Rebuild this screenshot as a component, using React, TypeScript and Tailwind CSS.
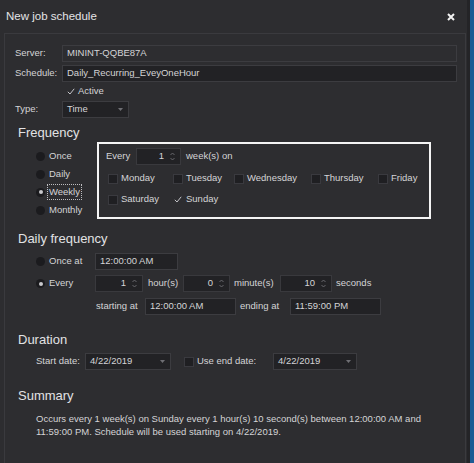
import React from "react";

const txt = "text-[9.5px] text-[#d4d4d6]";

function Arrows() {
  return (
    <svg width="5" height="9" viewBox="0 0 5 9" className="shrink-0">
      <path d="M0.5 3 L2.5 1 L4.5 3" fill="none" stroke="#6f6f74" strokeWidth="0.9" />
      <path d="M0.5 6 L2.5 8 L4.5 6" fill="none" stroke="#6f6f74" strokeWidth="0.9" />
    </svg>
  );
}

function Caret() {
  return (
    <svg width="5" height="3" viewBox="0 0 5 3" className="shrink-0">
      <path d="M0 0 L5 0 L2.5 3 Z" fill="#6f6f74" />
    </svg>
  );
}

function Spinner({ value, w }: { value: string; w: string }) {
  return (
    <div className={`${w} h-[17px] bg-[#222225] border border-[#39393d] flex items-center justify-end gap-[6px] pr-[5px] shrink-0`}>
      <span className={txt}>{value}</span>
      <Arrows />
    </div>
  );
}

function TextBox({ value, w, dark = true }: { value: string; w: string; dark?: boolean }) {
  return (
    <div className={`${w} h-[17px] ${dark ? "bg-[#222225]" : "bg-[#2d2d30]"} border border-[#3c3c40] flex items-center pl-[4px] shrink-0`}>
      <span className={txt}>{value}</span>
    </div>
  );
}

function Select({ value, w }: { value: string; w: string }) {
  return (
    <div className={`${w} h-[17px] bg-[#222225] border border-[#3c3c40] flex items-center justify-between pl-[4px] pr-[5px] shrink-0`}>
      <span className={txt}>{value}</span>
      <Caret />
    </div>
  );
}

function Radio({ checked = false }: { checked?: boolean }) {
  return (
    <span className="w-[9px] h-[9px] rounded-full bg-[#1b1b1e] flex items-center justify-center shrink-0">
      {checked && <span className="w-[4px] h-[4px] rounded-full bg-[#c8c8cc]" />}
    </span>
  );
}

function Check({ checked = false, box = true }: { checked?: boolean; box?: boolean }) {
  return (
    <span className={`w-[10px] h-[10px] ${box && !checked ? "bg-[#1f1f22] border border-[#3a3a3f]" : ""} flex items-center justify-center shrink-0`}>
      {checked && (
        <svg width="8" height="7" viewBox="0 0 8 7">
          <path d="M0.8 3.8 L3 6 L7.2 0.8" fill="none" stroke="#c4c4c8" strokeWidth="1" />
        </svg>
      )}
    </span>
  );
}

function Day({ label, w, checked = false }: { label: string; w: string; checked?: boolean }) {
  return (
    <div className={`${w} flex items-center gap-[3px]`}>
      <Check checked={checked} />
      <span className={txt}>{label}</span>
    </div>
  );
}

function Heading({ children, mt }: { children: React.ReactNode; mt: string }) {
  return (
    <div className={`${mt} ml-[3px] h-[18px] leading-[18px] text-[13px] text-[#e2e2e4]`}>{children}</div>
  );
}

export default function App() {
  return (
    <div className="w-[474px] h-[463px] bg-[#2d2d30] flex overflow-hidden font-['Liberation_Sans',Arial,sans-serif]">
      <div className="w-[467px] flex flex-col">
        <div className="h-[33px] flex items-center justify-between pl-[6px] pr-[12px] shrink-0">
          <span className="text-[11.5px] text-[#e4e4e6]">New job schedule</span>
          <svg width="8" height="8" viewBox="0 0 8 8">
            <path d="M1 1 L7 7 M7 1 L1 7" stroke="#f2f2f2" strokeWidth="2" />
          </svg>
        </div>

        <div className="ml-[4px] w-[462px] flex-1 border-t border-l border-r border-[#3a3a3e] pl-[10px] pr-[8px] pt-[11px] flex flex-col">
          <div className="h-[17px] flex items-center">
            <span className={`w-[47px] ${txt}`}>Server:</span>
            <TextBox value="MININT-QQBE87A" w="flex-1" dark={false} />
          </div>
          <div className="mt-[3px] h-[17px] flex items-center">
            <span className={`w-[47px] ${txt}`}>Schedule:</span>
            <TextBox value="Daily_Recurring_EveyOneHour" w="flex-1" />
          </div>
          <div className="mt-[3px] h-[13px] flex items-center pl-[51px] gap-[2px]">
            <Check checked box={false} />
            <span className={txt}>Active</span>
          </div>
          <div className="mt-[3px] h-[17px] flex items-center">
            <span className={`w-[47px] ${txt}`}>Type:</span>
            <Select value="Time" w="w-[67px]" />
          </div>

          <Heading mt="mt-[6px]">Frequency</Heading>

          <div className="flex">
            <div className="w-[82px] pl-[21px] pt-[5px] flex flex-col">
              {["Once", "Daily", "Weekly", "Monthly"].map((l) => (
                <div key={l} className="h-[18px] flex items-center gap-[4px]">
                  <Radio checked={l === "Weekly"} />
                  <span className={`${txt} ${l === "Weekly" ? "border border-dotted border-[#bdbdc0] px-[1px] -ml-[2px]" : ""}`}>{l}</span>
                </div>
              ))}
            </div>
            <div className="w-[334px] h-[77px] border-2 border-[#f4f4f4] pl-[7px] pt-[4px] flex flex-col">
              <div className="h-[17px] flex items-center">
                <span className={`w-[30px] ${txt}`}>Every</span>
                <Spinner value="1" w="w-[45px]" />
                <span className={`ml-[5px] ${txt}`}>week(s) on</span>
              </div>
              <div className="mt-[7px] h-[13px] flex items-center pl-[2px]">
                <Day label="Monday" w="w-[65px]" />
                <Day label="Tuesday" w="w-[61px]" />
                <Day label="Wednesday" w="w-[77px]" />
                <Day label="Thursday" w="w-[67px]" />
                <Day label="Friday" w="w-[50px]" />
              </div>
              <div className="mt-[8px] h-[13px] flex items-center pl-[2px]">
                <Day label="Saturday" w="w-[65px]" />
                <Day label="Sunday" w="w-[61px]" checked />
              </div>
            </div>
          </div>

          <Heading mt="mt-[11px]">Daily frequency</Heading>

          <div className="mt-[5px] h-[17px] flex items-center pl-[21px]">
            <div className="w-[59px] flex items-center gap-[4px]">
              <Radio />
              <span className={txt}>Once at</span>
            </div>
            <TextBox value="12:00:00 AM" w="w-[83px]" />
          </div>
          <div className="mt-[5px] h-[17px] flex items-center pl-[21px]">
            <div className="w-[59px] flex items-center gap-[4px]">
              <Radio checked />
              <span className={txt}>Every</span>
            </div>
            <Spinner value="1" w="w-[48px]" />
            <span className={`ml-[5px] w-[35px] ${txt}`}>hour(s)</span>
            <Spinner value="0" w="w-[47px]" />
            <span className={`ml-[4px] w-[46px] ${txt}`}>minute(s)</span>
            <Spinner value="10" w="w-[52px]" />
            <span className={`ml-[4px] ${txt}`}>seconds</span>
          </div>
          <div className="mt-[6px] h-[17px] flex items-center pl-[81px]">
            <span className={`w-[49px] ${txt}`}>starting at</span>
            <TextBox value="12:00:00 AM" w="w-[91px]" />
            <span className={`ml-[4px] w-[50px] ${txt}`}>ending at</span>
            <TextBox value="11:59:00 PM" w="w-[91px]" />
          </div>

          <Heading mt="mt-[16px]">Duration</Heading>

          <div className="mt-[4px] h-[17px] flex items-center pl-[21px]">
            <span className={`w-[49px] ${txt}`}>Start date:</span>
            <Select value="4/22/2019" w="w-[86px]" />
            <div className="ml-[13px] w-[89px] flex items-center gap-[3px]">
              <Check />
              <span className={txt}>Use end date:</span>
            </div>
            <Select value="4/22/2019" w="w-[84px]" />
          </div>

          <Heading mt="mt-[17px]">Summary</Heading>

          <p className={`mt-[7px] pl-[21px] pr-[20px] leading-[13px] ${txt}`}>
            Occurs every 1 week(s) on Sunday every 1 hour(s) 10 second(s) between 12:00:00 AM and
            11:59:00 PM. Schedule will be used starting on 4/22/2019.
          </p>
        </div>
      </div>
      <div className="w-[3px] bg-[#242427]" />
      <div className="w-[4px] bg-[#1b5b94]" />
    </div>
  );
}
